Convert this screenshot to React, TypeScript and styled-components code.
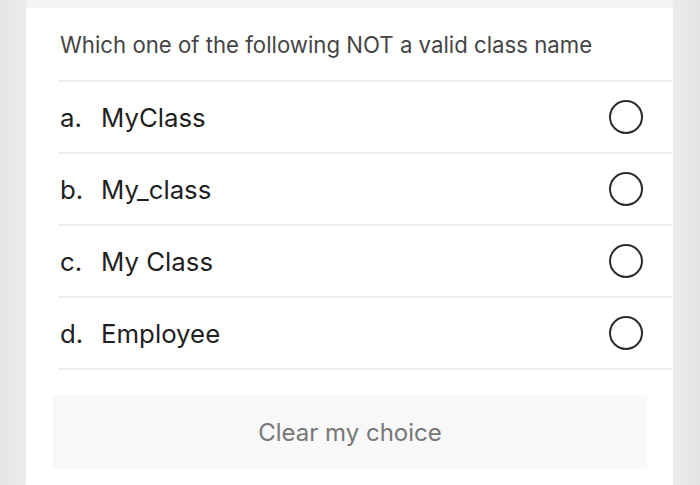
import styled, { createGlobalStyle } from "styled-components";

const GlobalStyle = createGlobalStyle`
  html, body {
    margin: 0;
    padding: 0;
    background: #e9e9e9;
  }
`;

const Page = styled.div`
  display: flex;
  width: 700px;
  height: 485px;
  overflow: hidden;
  background: linear-gradient(90deg, #e6e6e6 0%, #ececec 4%, #ececec 96%, #e4e4e4 100%);
`;

const Card = styled.div`
  box-sizing: border-box;
  width: 647px;
  margin-left: 26px;
  background: #ffffff;
  display: flex;
  flex-direction: column;
  font-family: "Inter", "Noto Sans", sans-serif;
`;

const TopStrip = styled.div`
  height: 8px;
  background: #f3f3f3;
`;

const Question = styled.div`
  height: 72px;
  box-sizing: border-box;
  padding: 0 0 0 34px;
  display: flex;
  align-items: center;
  font-size: 22.2px;
  color: #454545;
`;

const OptionList = styled.div`
  margin-left: 32px;
  border-top: 2px solid #efefef;
`;

const OptionRow = styled.label`
  box-sizing: border-box;
  height: 72px;
  display: flex;
  align-items: center;
  border-bottom: 2px solid #efefef;
  font-size: 25.8px;
  color: #1f1f1f;
  cursor: pointer;
`;

const Letter = styled.span`
  width: 41px;
  padding-left: 2px;
`;

const Label = styled.span`
  flex: 1;
`;

const Radio = styled.span`
  width: 30px;
  height: 30px;
  border: 2px solid #2a2a2a;
  border-radius: 50%;
  margin-right: 30px;
`;

const ClearButton = styled.button`
  margin: 25px 26px 0 27px;
  height: 74px;
  border: none;
  background: #f8f8f8;
  font-family: "Inter", "Noto Sans", sans-serif;
  font-size: 24px;
  color: #777777;
`;

const options = [
  { letter: "a.", label: "MyClass" },
  { letter: "b.", label: "My_class" },
  { letter: "c.", label: "My Class" },
  { letter: "d.", label: "Employee" },
];

export default function App() {
  return (
    <Page>
      <GlobalStyle />
      <Card>
        <TopStrip />
        <Question>Which one of the following NOT a valid class name</Question>
        <OptionList>
          {options.map((o) => (
            <OptionRow key={o.letter}>
              <Letter>{o.letter}</Letter>
              <Label>{o.label}</Label>
              <Radio />
            </OptionRow>
          ))}
        </OptionList>
        <ClearButton>Clear my choice</ClearButton>
      </Card>
    </Page>
  );
}
